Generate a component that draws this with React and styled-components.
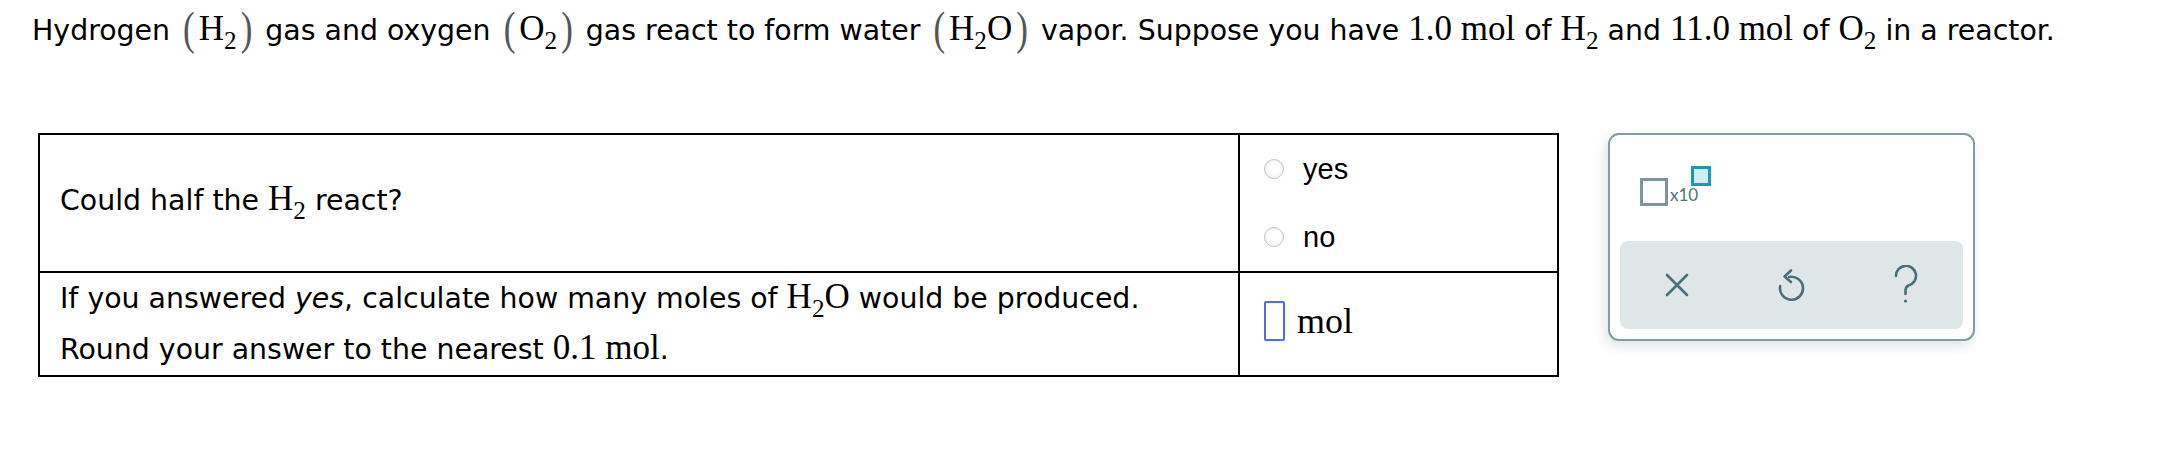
import React from "react";
import styled, { createGlobalStyle } from "styled-components";

const GlobalStyle = createGlobalStyle`
  html, body {
    margin: 0;
    padding: 0;
    background: #fff;
  }
  body {
    font-family: "DejaVu Sans", Verdana, sans-serif;
    color: #000;
  }
`;

const Page = styled.div`
  padding: 7px 0 0 32px;
`;

const Prompt = styled.p`
  margin: 0;
  font-size: 28.4px;
  line-height: 48px;
  white-space: nowrap;
`;

const MathText = styled.span`
  font-family: "Liberation Serif", "Times New Roman", serif;
  font-size: 35px;
  line-height: 1;
`;

const Sub = styled.span`
  font-size: 0.72em;
  position: relative;
  top: 0.34em;
  line-height: 0;
`;

const Paren = styled.span`
  display: inline-block;
  font-family: "Liberation Serif", serif;
  font-size: 35px;
  line-height: 1;
  color: #555;
  transform: scaleY(1.32);
  margin: 0 4px;
`;

const Formula = ({ children, wrapped }) => (
  <MathText>
    {wrapped && <Paren>(</Paren>}
    {children}
    {wrapped && <Paren>)</Paren>}
  </MathText>
);

const Workspace = styled.div`
  display: flex;
  align-items: flex-start;
  gap: 49px;
  margin: 78px 0 0 6px;
`;

const Grid = styled.table`
  border-collapse: collapse;
  table-layout: fixed;
  width: 1521px;
`;

const Row = styled.tr`
  height: ${(p) => p.$height}px;
`;

const Cell = styled.td`
  border: 2px solid #000;
  padding: 0 0 ${(p) => (p.$lift ? 5 : 0)}px ${(p) => (p.$answer ? 24 : 20)}px;
  vertical-align: middle;
  font-size: 28.4px;
  line-height: 51px;
`;

const Options = styled.div`
  display: flex;
  flex-direction: column;
  gap: 34px;
`;

const Option = styled.label`
  display: flex;
  align-items: center;
  gap: 19px;
  height: 34px;
  font-family: "Liberation Sans", Arial, sans-serif;
  font-size: 29px;
`;

const Radio = styled.span`
  width: 18px;
  height: 18px;
  border-radius: 50%;
  border: 1px solid #c4c4c4;
  background: radial-gradient(circle at 50% 35%, #ffffff 40%, #ececec 100%);
  box-shadow: inset 0 1px 1px rgba(0, 0, 0, 0.06);
`;

const AnswerLine = styled.div`
  display: flex;
  align-items: center;
  gap: 12px;
  padding-bottom: 6px;
`;

const AnswerBox = styled.span`
  width: 17px;
  height: 36px;
  border: 2px solid #5468f0;
  border-radius: 2px;
`;

const Unit = styled.span`
  font-family: "Liberation Serif", "Times New Roman", serif;
  font-size: 36px;
  line-height: 1;
`;

const Panel = styled.div`
  box-sizing: border-box;
  width: 367px;
  height: 208px;
  border: 2px solid #819ca3;
  border-radius: 11px;
  background: #fff;
  box-shadow: -3px 5px 12px rgba(40, 60, 70, 0.14);
  padding: 10px;
  display: flex;
  flex-direction: column;
  justify-content: space-between;
`;

const Template = styled.div`
  display: flex;
  align-items: flex-start;
  margin: 21px 0 0 20px;
  height: 40px;
`;

const BaseBox = styled.span`
  box-sizing: border-box;
  width: 28px;
  height: 28px;
  margin-top: 12px;
  border: 3px solid #7b959b;
`;

const Times = styled.span`
  align-self: flex-end;
  font-family: Lato, "Open Sans", sans-serif;
  font-size: 17px;
  line-height: 1;
  color: #50717a;
  margin: 0 0 3px 2px;
`;

const ExpBox = styled.span`
  box-sizing: border-box;
  width: 20px;
  height: 20px;
  margin-left: -7px;
  border: 3px solid #1a9bb1;
  background: #cdeef4;
`;

const Toolbar = styled.div`
  height: 88px;
  border-radius: 8px;
  background: #dfe6e8;
  display: grid;
  grid-template-columns: repeat(3, 1fr);
  align-items: center;
  justify-items: center;
`;

const ToolButton = styled.button`
  border: 0;
  background: none;
  padding: 0;
  display: flex;
  color: #48707a;
`;

const ClearIcon = () => (
  <svg width="26" height="26" viewBox="0 0 26 26" fill="none" stroke="currentColor" strokeWidth="2.6" strokeLinecap="round">
    <path d="M3 3 L23 23 M23 3 L3 23" />
  </svg>
);

const UndoIcon = () => (
  <svg width="30" height="34" viewBox="0 0 30 34" fill="none" stroke="currentColor" strokeWidth="2.6" strokeLinecap="round" strokeLinejoin="round">
    <path d="M13 9 A11.5 11.5 0 1 1 4.2 18" />
    <path d="M15 2.5 L8.5 8.5 L15 14" />
  </svg>
);

const HelpIcon = () => (
  <svg width="26" height="40" viewBox="0 0 26 40" fill="none" stroke="currentColor" strokeWidth="2.6" strokeLinecap="round">
    <path d="M3 11 A10 10 0 1 1 15.5 20.5 Q12.5 22 12.5 25.5 L12.5 29" />
    <circle cx="12.5" cy="36" r="1.6" fill="currentColor" stroke="none" />
  </svg>
);

export default function App() {
  return (
    <>
      <GlobalStyle />
      <Page>
        <Prompt>
          Hydrogen{" "}
          <Formula wrapped>
            H<Sub>2</Sub>
          </Formula>{" "}
          gas and oxygen{" "}
          <Formula wrapped>
            O<Sub>2</Sub>
          </Formula>{" "}
          gas react to form water{" "}
          <Formula wrapped>
            H<Sub>2</Sub>O
          </Formula>{" "}
          vapor. Suppose you have <Formula>1.0 mol</Formula> of{" "}
          <Formula>
            H<Sub>2</Sub>
          </Formula>{" "}
          and <Formula>11.0 mol</Formula> of{" "}
          <Formula>
            O<Sub>2</Sub>
          </Formula>{" "}
          in a reactor.
        </Prompt>

        <Workspace>
          <Grid>
            <colgroup>
              <col style={{ width: 1200 }} />
              <col />
            </colgroup>
            <tbody>
              <Row $height={138}>
                <Cell $lift>
                  Could half the{" "}
                  <Formula>
                    H<Sub>2</Sub>
                  </Formula>{" "}
                  react?
                </Cell>
                <Cell $answer>
                  <Options>
                    <Option>
                      <Radio />
                      yes
                    </Option>
                    <Option>
                      <Radio />
                      no
                    </Option>
                  </Options>
                </Cell>
              </Row>
              <Row $height={100}>
                <Cell>
                  <div>
                    If you answered <em>yes</em>, calculate how many moles of{" "}
                    <Formula>
                      H<Sub>2</Sub>O
                    </Formula>{" "}
                    would be produced.
                  </div>
                  <div>
                    Round your answer to the nearest <Formula>0.1 mol</Formula>.
                  </div>
                </Cell>
                <Cell $answer>
                  <AnswerLine>
                    <AnswerBox />
                    <Unit>mol</Unit>
                  </AnswerLine>
                </Cell>
              </Row>
            </tbody>
          </Grid>

          <Panel>
            <Template>
              <BaseBox />
              <Times>x10</Times>
              <ExpBox />
            </Template>
            <Toolbar>
              <ToolButton aria-label="clear">
                <ClearIcon />
              </ToolButton>
              <ToolButton aria-label="undo">
                <UndoIcon />
              </ToolButton>
              <ToolButton aria-label="help">
                <HelpIcon />
              </ToolButton>
            </Toolbar>
          </Panel>
        </Workspace>
      </Page>
    </>
  );
}
